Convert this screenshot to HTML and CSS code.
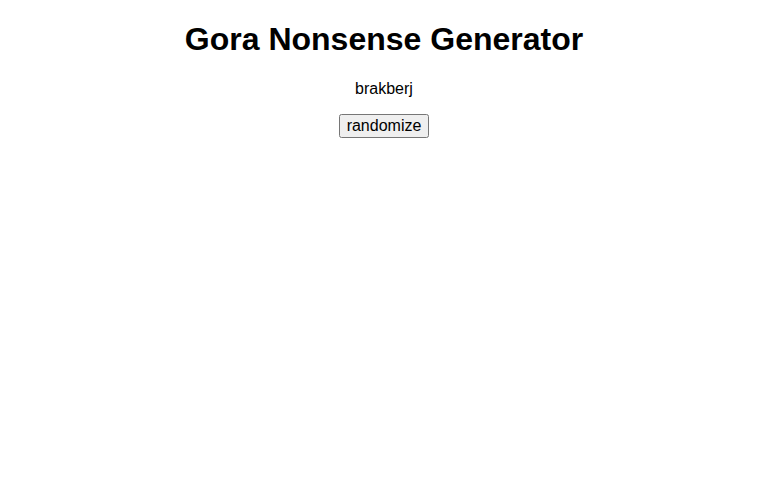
FILE: index.html
```html
<!DOCTYPE html>
<html lang="en">
<head>
    <meta charset="UTF-8">
    <meta name="viewport" content="width=device-width, initial-scale=1.0">
    <title>Gora Nonsense Generator</title>
    <link rel="stylesheet" href="styles.css">
</head>
<body>
<main class="main-content">
    <h1>Gora Nonsense Generator</h1>
    <p id="word" class="word">brakberj</p>
    <button id="randomize" class="randomize">randomize</button>
</main>
</body>
</html>
```

FILE: styles.css
```css
body {
  font-family: "Liberation Sans", Arial, sans-serif;
  background-color: #fff;
  color: #000;
  margin: 0 8px;
}

.main-content {
  text-align: center;
}

h1 {
  font-size: 32px;
}

.word {
  font-size: 16px;
}

.randomize {
  font-family: "Liberation Sans", Arial, sans-serif;
  font-size: 16px;
  padding: 1px 6px;
}
```
